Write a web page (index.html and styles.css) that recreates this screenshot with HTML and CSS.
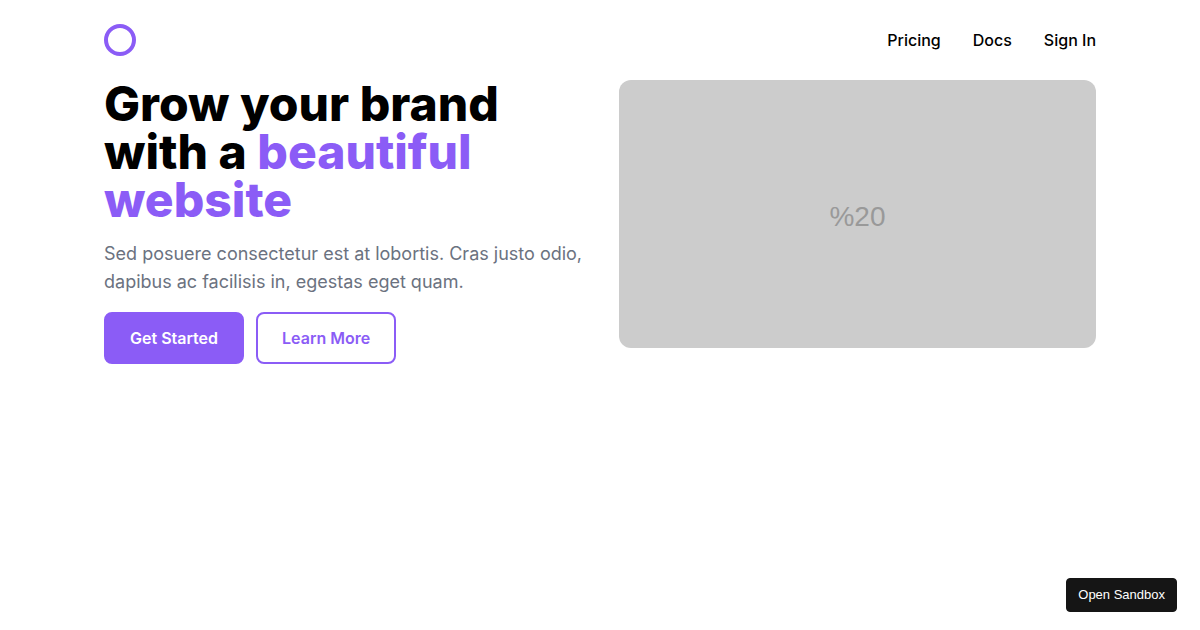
FILE: index.html
```html
<!DOCTYPE html>
<html lang="en">
<head>
<meta charset="utf-8">
<meta name="viewport" content="width=device-width, initial-scale=1">
<title>Grow your brand</title>
<link rel="stylesheet" href="styles.css">
</head>
<body>
<div class="container">
  <header class="header">
    <a class="logo" href="#" aria-label="Home">
      <svg width="32" height="32" viewBox="0 0 32 32" fill="none" aria-hidden="true"><circle cx="16" cy="16" r="14" stroke="currentColor" stroke-width="4"/></svg>
    </a>
    <nav class="nav">
      <a href="#">Pricing</a>
      <a href="#">Docs</a>
      <a href="#">Sign In</a>
    </nav>
  </header>
  <main class="hero">
    <section class="intro">
      <h1 class="title">Grow your brand with a <span class="accent">beautiful website</span></h1>
      <p class="lead">Sed posuere consectetur est at lobortis. Cras justo odio, dapibus ac facilisis in, egestas eget quam.</p>
      <div class="actions">
        <button class="button button-solid" type="button">Get Started</button>
        <button class="button button-outline" type="button">Learn More</button>
      </div>
    </section>
    <div class="placeholder">%20</div>
  </main>
</div>
<button class="sandbox" type="button">Open Sandbox</button>
</body>
</html>
```
FILE: styles.css
```css
* {
  box-sizing: border-box;
}

body {
  margin: 0;
  background: #fff;
  color: #000;
  font-family: Inter, sans-serif;
  font-size: 16px;
  line-height: 24px;
}

.container {
  max-width: 1024px;
  margin: 0 auto;
  padding: 0 16px;
}

.header {
  display: flex;
  align-items: center;
  justify-content: space-between;
  padding: 24px 0;
}

.logo {
  display: flex;
  color: #8b5cf6;
}

.nav {
  display: flex;
  gap: 32px;
}

.nav a {
  color: inherit;
  font-weight: 500;
  text-decoration: none;
}

.hero {
  display: grid;
  grid-template-columns: 483fr 477fr;
  gap: 32px;
  align-items: start;
}

.title {
  margin: 0 0 16px;
  font-size: 48px;
  font-weight: 800;
  line-height: 48px;
}

.accent {
  color: #8b5cf6;
}

.lead {
  margin: 0 0 16px;
  color: #6b7280;
  font-size: 18px;
  line-height: 28px;
}

.actions {
  display: flex;
  gap: 12px;
}

.button {
  padding: 12px 24px;
  border: 2px solid #8b5cf6;
  border-radius: 8px;
  font: inherit;
  font-weight: 600;
  cursor: pointer;
}

.button-solid {
  background: #8b5cf6;
  color: #fff;
}

.button-outline {
  background: #fff;
  color: #8b5cf6;
}

.placeholder {
  display: grid;
  place-items: center;
  aspect-ratio: 16 / 9;
  padding-top: 6px;
  border-radius: 12px;
  background: #ccc;
  color: #999;
  font-family: "Liberation Sans", sans-serif;
  font-size: 28px;
}

.sandbox {
  position: fixed;
  right: 23px;
  bottom: 18px;
  padding: 8px 11px;
  border: 1px solid #151515;
  border-radius: 4px;
  background: #151515;
  color: #fff;
  font-family: "Liberation Sans", sans-serif;
  font-size: 13px;
  line-height: 16px;
  cursor: pointer;
}
```
